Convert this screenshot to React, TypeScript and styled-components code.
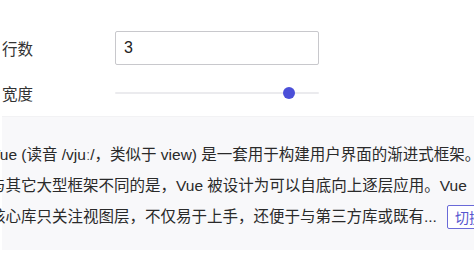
import React, { useState } from 'react'
import styled, { createGlobalStyle } from 'styled-components'

const GlobalStyle = createGlobalStyle`
  html, body {
    margin: 0;
    padding: 0;
    background: #fff;
    overflow: hidden;
  }
  body {
    font-family: "Liberation Sans", "Noto Sans CJK SC", sans-serif;
    color: #2c2c2c;
  }
`

const Page = styled.div`
  width: 474px;
  height: 266px;
  overflow: hidden;
  padding-top: 31px;
  box-sizing: border-box;
`

const Form = styled.div`
  display: flex;
  flex-direction: column;
  gap: 17px;
  padding-left: 2px;
`

const Row = styled.div<{ $height: number }>`
  display: grid;
  grid-template-columns: 113px 204px;
  align-items: center;
  height: ${p => p.$height}px;
`

const Label = styled.span`
  font-size: 15.5px;
  color: #333;
  white-space: nowrap;
`

const TextInput = styled.input`
  box-sizing: border-box;
  width: 204px;
  height: 34px;
  border: 1px solid #c8c8cc;
  border-radius: 2px;
  padding: 0 8px;
  font-family: "Liberation Sans", "Noto Sans CJK SC", sans-serif;
  font-size: 16px;
  color: #222;
  outline: none;
`

const Range = styled.input`
  -webkit-appearance: none;
  appearance: none;
  width: 204px;
  height: 12px;
  margin: 0;
  background: transparent;

  &::-webkit-slider-runnable-track {
    height: 2px;
    background: #ebebee;
    border-radius: 1px;
  }
  &::-webkit-slider-thumb {
    -webkit-appearance: none;
    width: 12px;
    height: 12px;
    border-radius: 50%;
    background: #4b4fd8;
    margin-top: -5px;
    border: none;
  }
`

const Intro = styled.div`
  margin-top: 14px;
  margin-left: 2px;
  height: 134px;
  box-sizing: border-box;
  padding: 22px 0 19px;
  background: #f8f8fa;
  border-top: 1px solid #f2f2f4;
`

const Paragraph = styled.div`
  margin-left: -12px;
  font-size: 15.5px;
  line-height: 31px;
  color: #2a2a2a;
`

const Line = styled.div`
  white-space: nowrap;
  display: flex;
  align-items: center;
`

const Toggle = styled.button`
  margin-left: 10px;
  height: 24px;
  padding: 0 7px;
  border: 1px solid #6a6ad8;
  border-radius: 2px;
  background: #fff;
  color: #5656cf;
  font-family: "Liberation Sans", "Noto Sans CJK SC", sans-serif;
  font-size: 14px;
  cursor: pointer;
`

export default function App() {
  const [rows, setRows] = useState('3')
  const [width, setWidth] = useState(87.5)
  const [expanded, setExpanded] = useState(false)

  return (
    <Page>
      <GlobalStyle />
      <Form>
        <Row $height={34}>
          <Label>行数</Label>
          <TextInput value={rows} onChange={e => setRows(e.target.value)} />
        </Row>
        <Row $height={20}>
          <Label>宽度</Label>
          <Range
            type="range"
            min={0}
            max={100}
            step={0.5}
            value={width}
            onChange={e => setWidth(Number(e.target.value))}
          />
        </Row>
      </Form>
      <Intro>
        <Paragraph>
          <Line>Vue (读音 /vjuː/，类似于 view) 是一套用于构建用户界面的渐进式框架。</Line>
          <Line>与其它大型框架不同的是，Vue 被设计为可以自底向上逐层应用。Vue</Line>
          <Line>
            核心库只关注视图层，不仅易于上手，还便于与第三方库或既有...
            <Toggle onClick={() => setExpanded(!expanded)}>{expanded ? '收起' : '切换'}</Toggle>
          </Line>
        </Paragraph>
      </Intro>
    </Page>
  )
}
